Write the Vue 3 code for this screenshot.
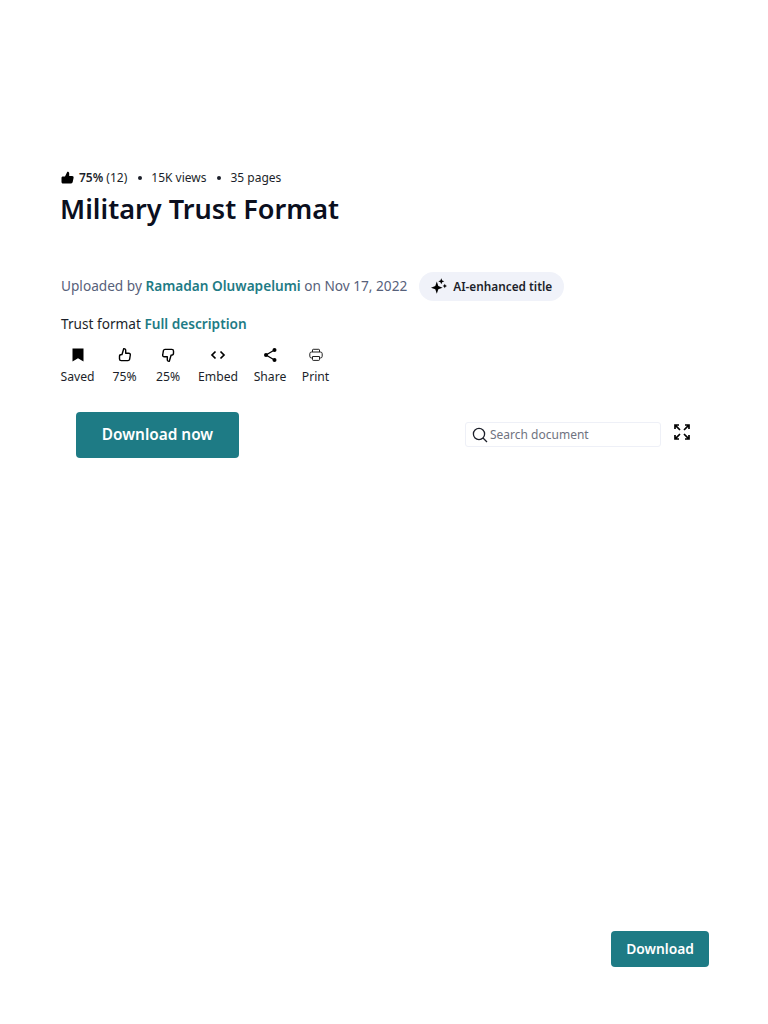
<script setup>
const actions = [
  { label: 'Saved', icon: 'saved', width: 35 },
  { label: '75%', icon: 'up', width: 27 },
  { label: '25%', icon: 'down', width: 28 },
  { label: 'Embed', icon: 'embed', width: 40 },
  { label: 'Share', icon: 'share', width: 32 },
  { label: 'Print', icon: 'print', width: 27 },
]
</script>

<template>
  <div class="page">
    <div class="meta">
      <svg class="meta-thumb" width="13" height="13" viewBox="0 0 13 13"><path d="M.5 7c0-.8.6-1.400 1.400-1.400H4L6.300.8c1.100-.2 1.900.5 1.900 1.500V5h3c1 0 1.600.8 1.400 1.700l-.9 4.400c-.2.800-.8 1.400-1.600 1.400H2c-.9 0-1.500-.6-1.500-1.500z" fill="#000"/></svg>
      <span class="meta-rate"><b>75%</b> (12)</span>
      <span class="dot"></span>
      <span>15K views</span>
      <span class="dot"></span>
      <span>35 pages</span>
    </div>
    <h1 class="title">Military Trust Format</h1>

    <div class="upload">
      <span>Uploaded by <a class="link">Ramadan Oluwapelumi</a> on Nov 17, 2022</span>
      <span class="pill">
        <svg width="16" height="16" viewBox="0 0 16 16"><path d="M5.800 3.500 7.300 8l4.300 1.700-4.300 1.600L5.800 15.800l-1.500-4.500L0 9.700 4.300 8z" fill="#000"/><path d="M10.300.3l.9 2.100 2.100.9-2.100.9-.9 2.100-.9-2.100-2.100-.9 2.100-.9zM13.800 5.800l.7 1.500 1.500.7-1.500.7-.7 1.500-.7-1.500-1.500-.7 1.500-.7z" fill="#000"/></svg>
        AI-enhanced title
      </span>
    </div>

    <p class="desc">Trust format <a class="link">Full description</a></p>

    <div class="actions">
      <div v-for="a in actions" :key="a.label" class="action" :style="{ width: a.width + 'px' }">
        <svg width="16" height="16" viewBox="0 0 16 16" class="action-icon">
          <path v-if="a.icon === 'saved'" d="M2.500 1.500h11V14.500L8 11.300 2.500 14.500z" fill="#000"/>
          <path v-else-if="a.icon === 'up'" d="M5 7.500 6.700 1.700c1.100-.3 2 .5 2 1.500V6.300h3.100c1 0 1.700.8 1.500 1.700l-.7 4.300c-.2.800-.8 1.300-1.600 1.300H4.200c-1 0-1.700-.7-1.700-1.700V9.200c0-1 .9-1.700 2.500-1.700z" fill="none" stroke="#000" stroke-width="1.400" stroke-linejoin="round"/>
          <path v-else-if="a.icon === 'down'" d="M11 8.500 9.300 14.300c-1.100.3-2-.5-2-1.500V9.700H4.200c-1 0-1.700-.8-1.500-1.700l.7-4.300c.2-.8.800-1.300 1.600-1.300h6.800c1 0 1.700.7 1.700 1.700v2.200c0 1-.9 1.900-2.500 1.900z" fill="none" stroke="#000" stroke-width="1.400" stroke-linejoin="round"/>
          <path v-else-if="a.icon === 'embed'" d="M5.500 4.500 2 8l3.500 3.500M10.500 4.500 14 8l-3.500 3.500" fill="none" stroke="#000" stroke-width="1.700"/>
          <g v-else-if="a.icon === 'share'">
            <path d="M12.500 3 4 8l8.500 5" fill="none" stroke="#000" stroke-width="1.300"/>
            <circle cx="12.500" cy="3" r="2" fill="#000"/><circle cx="4" cy="8" r="2" fill="#000"/><circle cx="12.500" cy="13" r="2" fill="#000"/>
          </g>
          <g v-else fill="none" stroke="#222" stroke-width="1">
            <path d="M4.500 5V3c0-.4.300-.7.700-.7h5.600c.4 0 .7.300.7.700v2"/>
            <rect x="1.800" y="5" width="12.400" height="6" rx="1.800"/>
            <path d="M4.500 9.500h7v3.200c0 .4-.3.700-.7.700H5.200c-.4 0-.7-.3-.7-.7z" fill="#fff"/>
          </g>
        </svg>
        <span class="action-label">{{ a.label }}</span>
      </div>
    </div>

    <div class="toolbar">
      <button class="btn btn-large">Download now</button>
      <div class="tools">
        <div class="search">
          <svg width="16" height="16" viewBox="0 0 16 16"><circle cx="7" cy="7" r="5.600" fill="none" stroke="#1c1f2a" stroke-width="1.300"/><path d="m11 11 4 4" stroke="#1c1f2a" stroke-width="1.300"/></svg>
          <span>Search document</span>
        </div>
        <svg width="16" height="16" viewBox="0 0 16 16" class="expand">
          <g fill="none" stroke="#000" stroke-width="1.700">
            <path d="M1 5V1h4M1.200 1.200 6 6"/>
            <path d="M15 5V1h-4M14.800 1.200 10 6"/>
            <path d="M1 11v4h4M1.200 14.800 6 10"/>
            <path d="M15 11v4h-4M14.800 14.800 10 10"/>
          </g>
        </svg>
      </div>
    </div>

    <div class="bottom">
      <button class="btn btn-small">Download</button>
    </div>
  </div>
</template>

<style>
html, body { margin: 0; background: #fff; }
</style>

<style scoped>
.page {
  box-sizing: border-box;
  width: 768px;
  height: 1024px;
  padding: 170px 59px 0 60px;
  display: flex;
  flex-direction: column;
  font-family: "Noto Sans", "Open Sans", sans-serif;
  color: #000;
  overflow: hidden;
}
.meta {
  display: flex;
  align-items: center;
  height: 15px;
  font-size: 12px;
  color: #1c1f2a;
}
.meta-thumb { margin: 0 5px 0 1px; }
.meta-rate b { font-weight: 600; }
.dot {
  width: 4px;
  height: 4px;
  border-radius: 50%;
  background: #1c1f2a;
  margin: 0 9px 0 11px;
}
.title {
  margin: 5px 0 0;
  font-size: 27.100px;
  line-height: 38px;
  font-weight: 600;
  color: #0b0f1e;
}
.upload {
  margin: 42px 0 0 1px;
  display: flex;
  align-items: center;
  gap: 12px;
  height: 30px;
  font-size: 13.650px;
  color: #57617a;
}
.link {
  color: #1e7b85;
  font-weight: 600;
}
.pill {
  display: inline-flex;
  align-items: center;
  gap: 6px;
  height: 29px;
  margin-top: 2px;
  padding: 0 12px;
  border-radius: 15px;
  background: #f0f2f9;
  font-size: 11.800px;
  font-weight: 600;
  color: #1c1f2a;
}
.desc {
  margin: 14px 0 0 1px;
  font-size: 13.650px;
  line-height: 20px;
  color: #1c1f2a;
}
.actions {
  margin-top: 13px;
  display: flex;
  gap: 16px;
}
.action {
  display: flex;
  flex-direction: column;
  align-items: center;
}
.action-icon { display: block; }
.action-label {
  margin-top: 6px;
  font-size: 12.200px;
  line-height: 16px;
  white-space: nowrap;
  color: #1c1f2a;
}
.toolbar {
  margin-top: 27px;
  padding-left: 16px;
  display: flex;
  justify-content: space-between;
  align-items: flex-start;
}
.btn {
  border: none;
  border-radius: 4px;
  background: #1e7b85;
  color: #fff;
  font-family: inherit;
  font-weight: 600;
  padding: 0 0 2px;
}
.btn-large {
  width: 163px;
  height: 46px;
  font-size: 15.400px;
}
.btn-small {
  width: 98px;
  height: 36px;
  font-size: 13.800px;
}
.tools {
  display: flex;
  align-items: flex-start;
  gap: 13px;
  padding-top: 10px;
  padding-right: 19px;
}
.search {
  box-sizing: border-box;
  width: 196px;
  height: 25px;
  border: 1px solid #eef0f7;
  border-radius: 3px;
  padding-left: 6px;
  display: flex;
  align-items: center;
  gap: 2px;
  font-size: 12px;
  color: #6f7380;
}
.expand { margin-top: 2px; }
.bottom {
  margin-top: auto;
  margin-bottom: 57px;
  display: flex;
  justify-content: flex-end;
}
</style>
